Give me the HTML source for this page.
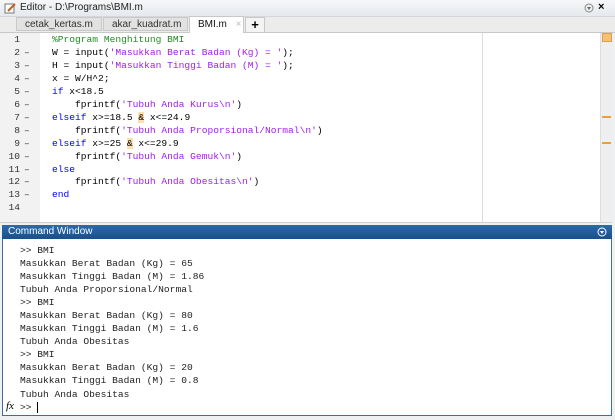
<!DOCTYPE html><html><head><style>
body{margin:0;width:615px;height:420px;background:#eef0f2;font-family:"Liberation Sans",sans-serif;position:relative;overflow:hidden}
.a{position:absolute}
.m{font-family:"Liberation Mono",monospace;font-size:9.6px;white-space:pre}
.g{color:#228b22}.p{color:#a020f0}.b{color:#0000ff}
</style></head><body>
<div class="a" style="left:0;top:0;width:615px;height:16px;background:linear-gradient(#f6f7f9,#e6e9ed);border-bottom:1px solid #d4d8dd"></div>
<svg class="a" style="left:4px;top:2px" width="12" height="12"><rect x="1" y="2" width="9" height="9" fill="#fff" stroke="#777"/><path d="M4 9 L11 2" stroke="#c06020" stroke-width="2"/></svg>
<div class="a" style="left:20px;top:2px;font-size:10px;color:#222">Editor - D:\Programs\BMI.m</div>
<svg class="a" style="left:584px;top:3px" width="10" height="10"><circle cx="5" cy="5" r="4" fill="#eee" stroke="#888"/><path d="M3 4h4l-2 3z" fill="#666"/></svg>
<div class="a" style="left:598px;top:1px;font-size:11px;font-weight:bold">×</div>
<div class="a" style="left:0;top:17px;width:615px;height:15px;background:#ececec;border-bottom:1px solid #c8c8c8"></div>
<div class="a" style="left:16px;top:17px;width:86px;height:14px;background:#e2e2e2;border:1px solid #c8c8c8;font-size:10px;color:#333;line-height:14px;padding-left:8px;box-sizing:border-box">cetak_kertas.m <span style="color:#bbb;margin-left:4px">×</span></div>
<div class="a" style="left:103px;top:17px;width:85px;height:14px;background:#e2e2e2;border:1px solid #c8c8c8;font-size:10px;color:#333;line-height:14px;padding-left:8px;box-sizing:border-box">akar_kuadrat.m <span style="color:#bbb;margin-left:4px">×</span></div>
<div class="a" style="left:189px;top:16px;width:55px;height:17px;background:#fff;border:1px solid #c8c8c8;border-bottom:none;font-size:10px;color:#111;line-height:16px;padding-left:8px;box-sizing:border-box">BMI.m <span style="color:#bbb;margin-left:6px">×</span></div>
<div class="a" style="left:245px;top:17px;width:18px;height:14px;background:#f4f4f4;border:1px solid #c8c8c8;font-size:13px;font-weight:bold;line-height:13px;text-align:center">+</div>
<div class="a" style="left:0;top:33px;width:612px;height:189px;background:#fff;border-bottom:1px solid #d0d0d0"></div>
<div class="a" style="left:0;top:33px;width:40px;height:189px;background:#f2f2f2"></div>
<div class="a" style="left:482px;top:33px;width:1px;height:189px;background:#ddd"></div>
<div class="a" style="left:600px;top:33px;width:12px;height:189px;background:#efefef;border-left:1px solid #ddd"></div>
<div class="a" style="left:602px;top:33px;width:8px;height:7px;background:#f8c070;border:1px solid #d8a050"></div>
<div class="a" style="left:602px;top:116px;width:9px;height:2px;background:#f0a030"></div>
<div class="a" style="left:602px;top:142px;width:9px;height:2px;background:#f0a030"></div>
<div class="a m" style="left:6px;top:34px;line-height:12.95px;color:#333;text-align:right;width:14px">1
2
3
4
5
6
7
8
9
10
11
12
13
14</div>
<div class="a m" style="left:24px;top:34px;line-height:12.95px;color:#333">
–
–
–
–
–
–
–
–
–
–
–
–</div>
<div class="a m" style="left:52px;top:34px;line-height:12.95px;color:#000"><span class="g">%Program Menghitung BMI</span>
W = input(<span class="p">'Masukkan Berat Badan (Kg) = '</span>);
H = input(<span class="p">'Masukkan Tinggi Badan (M) = '</span>);
x = W/H^2;
<span class="b">if</span> x&lt;18.5
    fprintf(<span class="p">'Tubuh Anda Kurus\n'</span>)
<span class="b">elseif</span> x&gt;=18.5 <span style="background:#fde0b0">&amp;</span> x&lt;=24.9
    fprintf(<span class="p">'Tubuh Anda Proporsional/Normal\n'</span>)
<span class="b">elseif</span> x&gt;=25 <span style="background:#fde0b0">&amp;</span> x&lt;=29.9
    fprintf(<span class="p">'Tubuh Anda Gemuk\n'</span>)
<span class="b">else</span>
    fprintf(<span class="p">'Tubuh Anda Obesitas\n'</span>)
<span class="b">end</span></div>
<div class="a" style="left:2px;top:225px;width:610px;height:14px;background:linear-gradient(#2d6aa8,#184f8c);color:#fff;font-size:10px;line-height:14px;padding-left:6px;box-sizing:border-box">Command Window</div>
<svg class="a" style="left:597px;top:227px" width="10" height="10"><circle cx="5" cy="5" r="4" fill="none" stroke="#fff"/><path d="M3 4h4l-2 3z" fill="#fff"/></svg>
<div class="a" style="left:2px;top:239px;width:608px;height:176px;background:#fff;border:1px solid #3a6ea8;border-top:none"></div>
<div class="a m" style="left:20px;top:244px;line-height:13.05px;color:#222">&gt;&gt; BMI
Masukkan Berat Badan (Kg) = 65
Masukkan Tinggi Badan (M) = 1.86
Tubuh Anda Proporsional/Normal
&gt;&gt; BMI
Masukkan Berat Badan (Kg) = 80
Masukkan Tinggi Badan (M) = 1.6
Tubuh Anda Obesitas
&gt;&gt; BMI
Masukkan Berat Badan (Kg) = 20
Masukkan Tinggi Badan (M) = 0.8
Tubuh Anda Obesitas
&gt;&gt; <span style="border-left:1px solid #000"> </span></div>
<div class="a" style="left:6px;top:400px;font-family:'Liberation Serif',serif;font-style:italic;font-size:11px">fx</div>
</body></html>
